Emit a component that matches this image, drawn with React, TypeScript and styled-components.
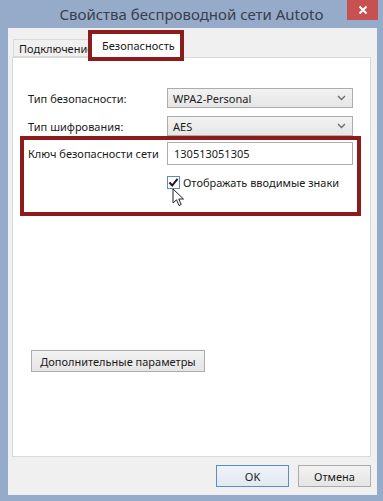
import styled, { createGlobalStyle } from "styled-components";

const GlobalStyle = createGlobalStyle`
  html, body {
    margin: 0;
    padding: 0;
    background: #95abc9;
  }
  * {
    box-sizing: border-box;
  }
`;

const ChevronIcon = () => (
  <svg width="9" height="6" viewBox="0 0 9 6">
    <path d="M1 1 L4.5 4.5 L8 1" fill="none" stroke="#6d6d6d" strokeWidth="1.4" />
  </svg>
);

const CheckIcon = () => (
  <svg width="11" height="11" viewBox="0 0 11 11">
    <path
      d="M1.5 5.5 L4.2 8.5 L9.5 1.8"
      fill="none"
      stroke="#1c1c1c"
      strokeWidth="2"
    />
  </svg>
);

const PointerIcon = () => (
  <svg width="13" height="19" viewBox="0 0 13 19">
    <path
      d="M1 1 L1 15 L4.5 11.8 L7 17.5 L9.2 16.5 L6.8 11 L11.5 11 Z"
      fill="#fff"
      stroke="#222"
      strokeWidth="1"
      strokeLinejoin="round"
    />
  </svg>
);

const CloseIcon = () => (
  <svg width="10" height="10" viewBox="0 0 10 10">
    <path d="M1.5 1.5 L8.5 8.5 M8.5 1.5 L1.5 8.5" stroke="#fff" strokeWidth="2" />
  </svg>
);

const App = () => {
  return (
    <Window>
      <GlobalStyle />
      <TitleBar>
        <span />
        <Title>Свойства беспроводной сети Autoto</Title>
        <CloseButton>
          <CloseIcon />
        </CloseButton>
      </TitleBar>
      <DialogBody>
        <TabStrip>
          <Tab width={80}>Подключение</Tab>
          <Tab active width={90}>
            Безопасность
          </Tab>
        </TabStrip>
        <TabPanel>
          <FieldRow>
            <Label>Тип безопасности:</Label>
            <Select>
              <span>WPA2-Personal</span>
              <ChevronIcon />
            </Select>
          </FieldRow>
          <FieldRow>
            <Label>Тип шифрования:</Label>
            <Select>
              <span>AES</span>
              <ChevronIcon />
            </Select>
          </FieldRow>
          <Highlight>
            <FieldRow>
              <Label>Ключ безопасности сети</Label>
              <TextInput>130513051305</TextInput>
            </FieldRow>
            <FieldRow>
              <span />
              <CheckRow>
                <CheckBox>
                  <CheckIcon />
                </CheckBox>
                <Label>Отображать вводимые знаки</Label>
                <Pointer>
                  <PointerIcon />
                </Pointer>
              </CheckRow>
            </FieldRow>
          </Highlight>
          <ButtonRow>
            <Button wide>Дополнительные параметры</Button>
          </ButtonRow>
        </TabPanel>
        <Footer>
          <Button isDefault>OK</Button>
          <Button>Отмена</Button>
        </Footer>
      </DialogBody>
    </Window>
  );
};

const Window = styled.div`
  width: 383px;
  height: 501px;
  display: flex;
  flex-direction: column;
  background: #95abc9;
  font-family: "Noto Sans", "Open Sans", sans-serif;
  font-size: 11px;
  color: #1a1a1a;
  overflow: hidden;
`;

const TitleBar = styled.div`
  height: 28px;
  display: grid;
  grid-template-columns: 1fr auto 1fr;
  align-items: start;
`;

const Title = styled.div`
  font-size: 15px;
  color: #3a404a;
  padding-top: 4px;
  white-space: nowrap;
`;

const CloseButton = styled.div`
  justify-self: end;
  width: 31px;
  height: 20px;
  margin-right: 5px;
  background: #c75050;
  display: flex;
  align-items: center;
  justify-content: center;
`;

const DialogBody = styled.div`
  flex: 1;
  margin: 0 6px 6px 8px;
  background: #f0f0f0;
  display: flex;
  flex-direction: column;
  padding: 4px 6px 8px 4px;
`;

const TabStrip = styled.div`
  display: flex;
  align-items: flex-end;
  height: 25px;
  padding-left: 1px;
  position: relative;
  z-index: 1;
`;

const Tab = styled.div<{ active?: boolean; width: number }>`
  flex: none;
  width: ${({ width }) => width}px;
  height: ${({ active }) => (active ? "25px" : "18px")};
  padding: ${({ active }) => (active ? "4px 0 0 10px" : "1px 0 0 5px")};
  margin-bottom: ${({ active }) => (active ? "-1px" : "0")};
  margin-left: ${({ active }) => (active ? "-2px" : "0")};
  border: 1px solid #d9d9d9;
  border-bottom: ${({ active }) => (active ? "none" : "1px solid #d9d9d9")};
  background: ${({ active }) => (active ? "#fff" : "#f0f0f0")};
  outline: ${({ active }) => (active ? "4px solid #8c1b1b" : "none")};
  outline-offset: -1px;
  white-space: nowrap;
  overflow: visible;
`;

const TabPanel = styled.div`
  height: 400px;
  background: #fff;
  border: 1px solid #d9d9d9;
  padding: 30px 17px 0 15px;
  display: flex;
  flex-direction: column;
`;

const FieldRow = styled.div`
  display: grid;
  grid-template-columns: 139px 1fr;
  align-items: center;
  margin-bottom: 8px;
`;

const Label = styled.span`
  white-space: nowrap;
`;

const Select = styled.div`
  height: 20px;
  border: 1px solid #acacac;
  background: linear-gradient(#f2f2f2, #e6e6e6);
  display: flex;
  align-items: center;
  justify-content: space-between;
  padding: 0 6px 0 5px;
`;

const Highlight = styled.div`
  margin: -8px -8px 0;
  border: 4px solid #8c1b1b;
  padding: 2px 4px 0;
  height: 80px;
`;

const TextInput = styled.div`
  height: 23px;
  border: 1px solid #acacac;
  background: #fff;
  display: flex;
  align-items: center;
  padding-left: 6px;
`;

const CheckRow = styled.div`
  display: flex;
  align-items: center;
  gap: 3px;
  margin-top: 2px;
  position: relative;
`;

const CheckBox = styled.div`
  width: 13px;
  height: 13px;
  border: 1px solid #5a8dbd;
  background: #fff;
  display: flex;
  align-items: center;
  justify-content: center;
`;

const Pointer = styled.div`
  position: absolute;
  left: 5px;
  top: 13px;
  line-height: 0;
`;

const ButtonRow = styled.div`
  margin-top: 134px;
  display: flex;
`;

const Button = styled.div<{ wide?: boolean; isDefault?: boolean }>`
  height: 22px;
  width: ${({ wide }) => (wide ? "174px" : "73px")};
  margin-left: ${({ wide }) => (wide ? "3px" : "0")};
  border: 1px solid ${({ isDefault }) => (isDefault ? "#5b8fbf" : "#acacac")};
  background: ${({ isDefault }) =>
    isDefault
      ? "linear-gradient(#eef3f8, #e1e9f1)"
      : "linear-gradient(#f2f2f2, #e5e5e5)"};
  display: flex;
  align-items: center;
  justify-content: center;
  white-space: nowrap;
`;

const Footer = styled.div`
  margin-top: auto;
  display: flex;
  justify-content: flex-end;
  gap: 9px;
`;

export default App;
